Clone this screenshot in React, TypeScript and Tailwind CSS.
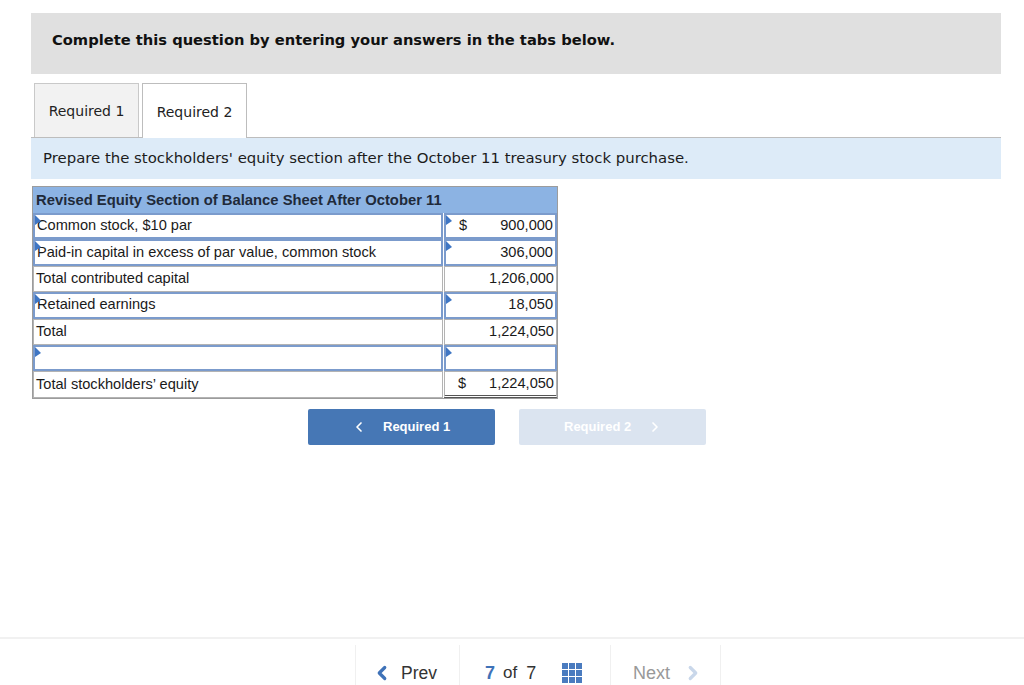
import { ChevronLeft, ChevronRight } from "lucide-react";

const VERDANA = "font-['DejaVu_Sans',Verdana,sans-serif]";
const ARIAL = "font-['Liberation_Sans',Arial,sans-serif]";

type RowDef = {
  label: string;
  amount?: string;
  dollar?: boolean;
  input?: boolean;
  total?: boolean;
};

const rows: RowDef[] = [
  { label: "Common stock, $10 par", amount: "900,000", dollar: true, input: true },
  { label: "Paid-in capital in excess of par value, common stock", amount: "306,000", input: true },
  { label: "Total contributed capital", amount: "1,206,000" },
  { label: "Retained earnings", amount: "18,050", input: true },
  { label: "Total", amount: "1,224,050" },
  { label: "", amount: "", input: true },
  { label: "Total stockholders\u2019 equity", amount: "1,224,050", dollar: true, total: true },
];

/** small blue corner flag shown on editable cells */
function Flag() {
  return (
    <span className="absolute left-0 top-0 h-0 w-0 border-l-[6px] border-t-[6px] border-l-[#3f76c4] border-b-[4px] border-b-transparent border-t-transparent" />
  );
}

function Cell({
  input,
  className,
  children,
}: {
  input?: boolean;
  className?: string;
  children?: React.ReactNode;
}) {
  return (
    <div
      className={[
        "relative flex items-center bg-white",
        input ? "border-2 border-[#7b9bcc]" : "border border-[#b3b3b3]",
        className ?? "",
      ].join(" ")}
    >
      {input && <Flag />}
      {children}
    </div>
  );
}

function EquityTable() {
  return (
    <div className={`w-[526px] border border-[#9c9c9c] bg-white ${ARIAL} text-[14.6px] text-[#1a1a1a]`}>
      <div className="flex h-[26px] items-center bg-[#8cb3e3] px-[3px] text-[14.8px] font-bold text-[#1f2a3a]">
        Revised Equity Section of Balance Sheet After October 11
      </div>
      {rows.map((r, i) => (
        <div key={i} className="flex h-[26.4px] gap-[1px]">
          <Cell input={r.input} className="w-[410px] pl-[2px]">
            {r.label}
          </Cell>
          <Cell
            input={r.input}
            className={[
              "flex-1 justify-between pl-[13px] pr-[2px]",
              r.total ? "border-b-[3px] border-b-[#555] [border-bottom-style:double]" : "",
            ].join(" ")}
          >
            <span>{r.dollar ? "$" : ""}</span>
            <span>{r.amount}</span>
          </Cell>
        </div>
      ))}
    </div>
  );
}

function GridIcon() {
  return (
    <svg width="20" height="20" viewBox="0 0 20 20">
      {[0, 1, 2].map((r) =>
        [0, 1, 2].map((c) => (
          <rect key={`${r}-${c}`} x={c * 7} y={r * 7} width="6" height="6" fill="#4a7bbf" />
        )),
      )}
    </svg>
  );
}

export default function App() {
  return (
    <div className="flex h-[685px] flex-col overflow-hidden bg-white">
      <div className="pl-[31px] pt-[13px]">
        <div className={`h-[61px] w-[970px] bg-[#e0e0e0] pl-[21px] pt-[15px] ${VERDANA}`}>
          <span className="text-[14.7px] font-bold text-[#111]">
            Complete this question by entering your answers in the tabs below.
          </span>
        </div>

        {/* tabs */}
        <div className={`mt-[9px] flex w-[970px] gap-[3px] border-b border-[#bdbdbd] pl-[3px] ${VERDANA} text-[14px] text-[#222]`}>
          <div className="flex h-[54px] w-[105px] items-center justify-center border border-b-0 border-[#c9c9c9] bg-[#f2f2f2] pt-[2px]">
            Required 1
          </div>
          <div className="-mb-px flex h-[55px] w-[105px] items-center justify-center border border-b-0 border-[#bdbdbd] bg-white pt-[2px]">
            Required 2
          </div>
        </div>

        <div className={`flex h-[41px] w-[970px] items-center bg-[#ddebf8] pl-[12px] ${VERDANA} text-[14.9px] text-[#1c1c1c]`}>
          Prepare the stockholders' equity section after the October 11 treasury stock purchase.
        </div>

        <div className="ml-[1px] mt-[7px]">
          <EquityTable />
        </div>

        <div className={`ml-[277px] mt-[10px] flex gap-[24px] ${ARIAL} text-[13px] font-bold text-white`}>
          <div className="flex h-[36px] w-[187px] items-center gap-[16px] rounded-[2px] bg-[#4677b5] pl-[43px]">
            <ChevronLeft size={16} strokeWidth={2.5} />
            <span>Required 1</span>
          </div>
          <div className="flex h-[36px] w-[187px] items-center gap-[16px] rounded-[2px] bg-[#dbe4f0] pl-[45px]">
            <span>Required 2</span>
            <ChevronRight size={16} strokeWidth={2.5} />
          </div>
        </div>
      </div>

      {/* bottom navigation */}
      <div className={`mt-auto h-[48px] shrink-0 border-t-2 border-[#f1f1f1] pt-[6px] ${ARIAL}`}>
        <div className="ml-[355px] flex h-[56px]">
          <div className="flex w-[105px] items-center gap-[8px] border-x border-[#f0f0f0] pl-[15px] text-[17.5px] text-[#333]">
            <ChevronLeft size={22} strokeWidth={3.5} className="text-[#3f72b8]" />
            <span>Prev</span>
          </div>
          <div className="flex w-[151px] items-center border-r border-[#f0f0f0] pl-[25px] text-[18px] text-[#333]">
            <span className="font-bold text-[#3f72b8]">7</span>
            <span className="ml-[8px] text-[17px]">of</span>
            <span className="ml-[9px]">7</span>
            <span className="ml-[26px] flex">
              <GridIcon />
            </span>
          </div>
          <div className="flex w-[110px] items-center border-r border-[#f0f0f0] pl-[22px] text-[18px] text-[#999]">
            <span>Next</span>
            <ChevronRight size={22} strokeWidth={3.5} className="ml-[12px] text-[#c9d7ea]" />
          </div>
        </div>
      </div>
    </div>
  );
}
